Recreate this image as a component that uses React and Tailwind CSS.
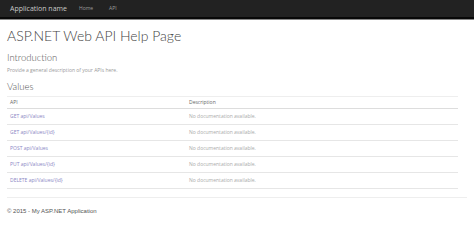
export default function App() {
  const rows = [
    ['GET api/Values', 'No documentation available.'],
    ['GET api/Values/{id}', 'No documentation available.'],
    ['POST api/Values', 'No documentation available.'],
    ['PUT api/Values/{id}', 'No documentation available.'],
    ['DELETE api/Values/{id}', 'No documentation available.'],
  ];

  return (
    <div className="w-[474px] h-[248px] bg-white overflow-hidden font-['Open_Sans',sans-serif]">
      {/* Navbar */}
      <div className="h-[19px] bg-[#222] border-b-[2px] border-b-[#080808] shadow-[0_1px_0_#888] flex items-center px-[10px]">
        <span className="text-[7px] text-[#c9c9c9] leading-none">Application name</span>
        <span className="ml-[12px] text-[5px] text-[#9d9d9d] leading-none">Home</span>
        <span className="ml-[16px] text-[5px] text-[#9d9d9d] leading-none">API</span>
      </div>

      <div className="px-[7px]">
        <h1 className="mt-[7px] text-[14px] font-light text-[#444] leading-[20px] font-['Lato',sans-serif]">
          ASP.NET Web API Help Page
        </h1>

        <h2 className="mt-[5px] text-[9.5px] font-light text-[#555] leading-[14px] font-['Lato',sans-serif]">Introduction</h2>
        <p className="mt-[2px] text-[5px] text-[#999] leading-[7px]">
          Provide a general description of your APIs here.
        </p>

        <h2 className="mt-[6px] text-[9.5px] font-light text-[#555] leading-[14px] font-['Lato',sans-serif]">Values</h2>

        <table className="mt-[2px] w-[451px] border-collapse">
          <thead>
            <tr className="h-[12px] border-t border-t-[#eee] border-b border-b-[#ddd]">
              <th className="text-left font-normal text-[5px] text-[#666] pl-[3px] w-[182px]">API</th>
              <th className="text-left font-normal text-[5px] text-[#666]">Description</th>
            </tr>
          </thead>
          <tbody>
            {rows.map(([api, desc]) => (
              <tr key={api} className="h-[16px] border-b border-b-[#e6e6e6]">
                <td className="pl-[3px] text-[5px] text-[#8a86c4]">{api}</td>
                <td className="text-[5px] text-[#aaa]">{desc}</td>
              </tr>
            ))}
          </tbody>
        </table>

        <div className="mt-[8px] border-t border-t-[#eee]" />
        <p className="mt-[9px] text-[6px] text-[#555] font-['Liberation_Sans',sans-serif] leading-[8px]">
          © 2015 - My ASP.NET Application
        </p>
      </div>
    </div>
  );
}
